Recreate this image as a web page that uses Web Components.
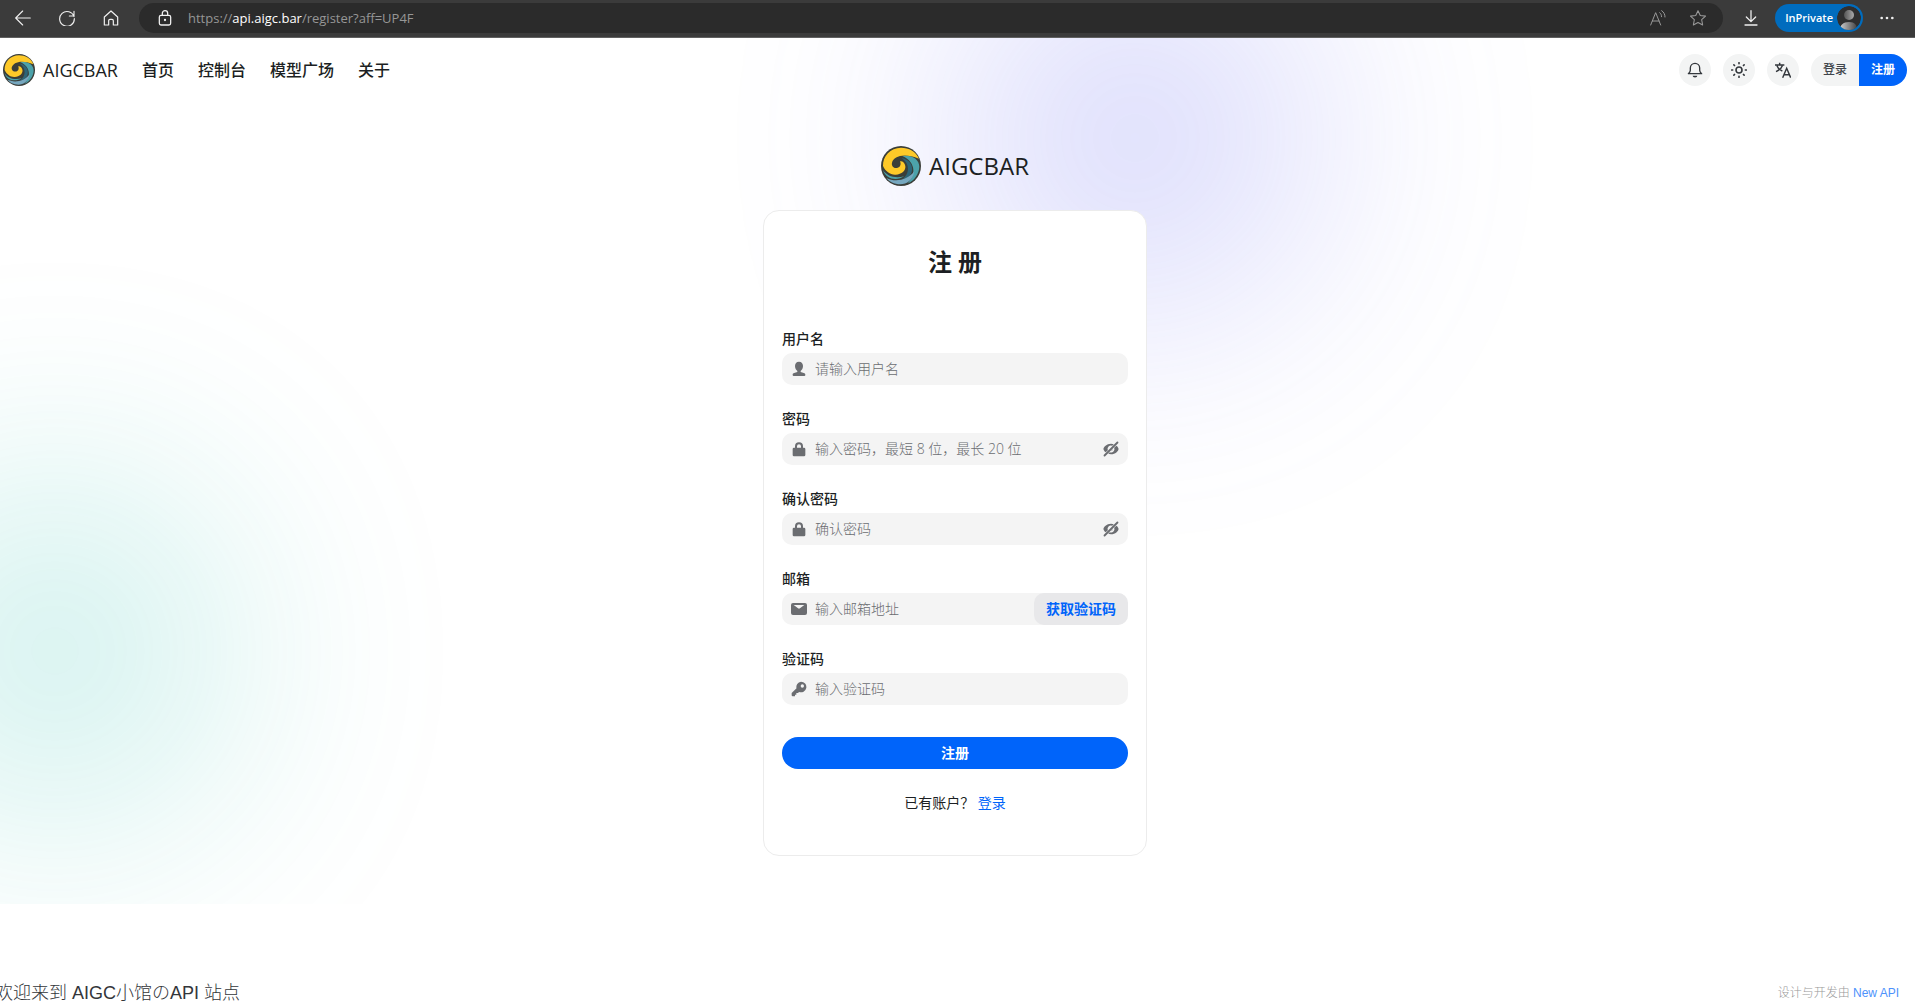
<!DOCTYPE html>
<html lang="zh-CN">
<head>
<meta charset="utf-8">
<meta name="viewport" content="width=device-width, initial-scale=1">
<title>AIGCBAR</title>
<style>
body{
    margin: 0;
    background: #fff;
    color: #1c1f23;
    font-family: "Open Sans", "Noto Sans CJK SC", sans-serif;
    font-size: 14px;
    line-height: 20px;
    overflow: hidden;
}
</style>
</head>
<body>
<browser-bar></browser-bar>
<register-page></register-page>

<script>
const ICONS = {
    user: '<path fill="currentColor" d="M12 1c4 0 6 3 6 6.500c0 3-1.500 6-3.500 7.500v1.500c3 .8 7 1.500 7 4c0 1.500-.8 2-2 2h-15c-1.200 0-2-.5-2-2c0-2.500 4-3.200 7-4V15C7.500 13.500 6 10.500 6 7.500C6 4 8 1 12 1z"/>',
    lock: '<path fill="currentColor" d="M6 10V8a6 6 0 0 1 12 0v2h1.500a2 2 0 0 1 2 2v9a2 2 0 0 1-2 2h-15a2 2 0 0 1-2-2v-9a2 2 0 0 1 2-2zm3 0h6V8a3 3 0 0 0-6 0z"/>',
    mail: '<path fill="currentColor" d="M0 6a3 3 0 0 1 3-3h18a3 3 0 0 1 3 3v12a3 3 0 0 1-3 3H3a3 3 0 0 1-3-3zm4 0l6.600 5a2.300 2.300 0 0 0 2.800 0L20 6z"/>',
    key: '<path fill="currentColor" fill-rule="evenodd" d="M15 1a8 8 0 1 1-3 15.400L10.500 18H8v2.500H6V23H2.500A1.500 1.500 0 0 1 1 21.500V18l7.300-7A8 8 0 0 1 15 1zm2 4a2.500 2.500 0 1 0 0 5a2.500 2.500 0 0 0 0-5z"/>',
    eyeClosed: '<path fill="currentColor" d="M20.700 1.300a1.400 1.400 0 0 1 2 2l-19.400 19.400a1.400 1.400 0 0 1-2-2zM12 4c1.500 0 2.900.3 4.200.7l-2.500 2.500A5 5 0 0 0 7.200 13.700l-3.300 3.300C1.900 15.400.7 13.400.7 12C.7 9 5.500 4 12 4zM20.200 7.100c2 1.600 3.100 3.500 3.100 4.900c0 3-4.800 8-11.300 8c-1.500 0-2.900-.3-4.200-.7l2.500-2.500A5 5 0 0 0 16.800 10.300zM14.700 12.400a2.800 2.800 0 0 1-2.500 2.400z"/>',
    bell: '<path fill="none" stroke="currentColor" stroke-width="2" stroke-linejoin="round" d="M2 17.500h20c-1.800-1.500-3-3-3-5V9a7 7 0 0 0-14 0v3.500c0 2-1.200 3.500-3 5z"/><path fill="currentColor" d="M8.500 20.500h7a3.500 2.700 0 0 1-7 0z"/>',
    sun: '<g fill="none" stroke="currentColor" stroke-width="2.400"><circle cx="12" cy="12" r="4.500"/><path stroke-linecap="round" d="M12 1v1.500M12 21.500V23M1 12h1.500M21.500 12H23M4.300 4.300l1 1M18.700 18.700l1 1M4.300 19.700l1-1M18.700 5.300l1-1"/></g>',
    lang: '<g fill="none" stroke="currentColor" stroke-width="2.200"><path d="M0 4.500h14M7 1v3.500M3 5.500c1.500 4 4.500 6.500 8 8M11 5.500c-1.500 4.500-5 7-9.500 9M11.500 23.500L17.500 9.500l6 14M13.500 19h8"/></g>',
    back: '<path fill="none" stroke="currentColor" stroke-width="1.600" stroke-linecap="round" stroke-linejoin="round" d="M23 12H1.500M11.500 1.500L1 12l10.500 10.500"/>',
    reload: '<path fill="none" stroke="currentColor" stroke-width="1.700" stroke-linecap="round" stroke-linejoin="round" d="M22.500 10a11 11 0 1 0 .5 3M22.500 2v7h-7"/>',
    home: '<path fill="none" stroke="currentColor" stroke-width="1.800" stroke-linejoin="round" d="M2 10.500L12 1.500l10 9V22.500h-6.500V16a2 2 0 0 0-2-2h-3a2 2 0 0 0-2 2v6.500H2z"/>',
    site: '<g fill="none" stroke="currentColor" stroke-width="1.900"><rect x="3.500" y="8" width="17" height="14.500" rx="2.500"/><path d="M8 8V5a4 4 0 0 1 8 0v3"/></g><circle fill="currentColor" cx="12" cy="15" r="1.700"/>',
    read: '<g fill="none" stroke="currentColor" stroke-width="1.500" stroke-linecap="round"><path d="M1 22.500L8.500 4 16 22.500M3.500 16.500h10M14.500 4c2 1.500 2.800 3.500 2.800 6M17.500 1c3.500 2.500 5 5.500 5 9.500"/></g>',
    star: '<path fill="none" stroke="currentColor" stroke-width="1.600" stroke-linejoin="round" d="M12 1l3.400 7.200 7.900 1-5.800 5.400 1.500 7.900L12 18.700 5 22.500l1.500-7.900L.7 9.200l7.900-1z"/>',
    download: '<path fill="none" stroke="currentColor" stroke-width="1.900" stroke-linecap="round" stroke-linejoin="round" d="M12 1v16M5 10.500l7 7 7-7M3 22.500h18"/>',
    more: '<g fill="currentColor"><circle cx="4" cy="12" r="2"/><circle cx="12" cy="12" r="2"/><circle cx="20" cy="12" r="2"/></g>'
};

class UiIcon extends HTMLElement{
    constructor(){
        super();
        const shadowRoot = this.attachShadow({mode: 'open'});
        shadowRoot.innerHTML = `
        <style>
        :host{
            display: block;
            flex: none;
            width: 16px;
            height: 16px;
        }

        svg{
            display: block;
            width: 100%;
            height: 100%;
        }
        </style>

        <svg viewBox="0 0 24 24" aria-hidden="true">${ICONS[this.getAttribute('name')] || ''}</svg>
        `;
    }
}

// round swirl mark + name, size="large" above the form
class BrandLogo extends HTMLElement{
    constructor(){
        super();
        const shadowRoot = this.attachShadow({mode: 'open'});
        shadowRoot.innerHTML = `
        <style>
        :host{
            display: flex;
            align-items: center;
            gap: 8px;
            font-size: 18px;
            line-height: 32px;
        }

        svg{
            width: 32px;
            height: 32px;
        }

        :host([size="large"]){
            font-size: 24px;
            justify-content: center;
        }

        :host([size="large"]) svg{
            width: 40px;
            height: 40px;
        }
        </style>

        <svg viewBox="0 0 120 120" aria-hidden="true">
            <circle cx="60" cy="60" r="60" fill="#3b3e39"/>
            <path fill="#4ca2aa" d="M64 30C92 25 115 40 115 62C114 84 100 104 80 112C103 90 108 50 64 30Z"/>
            <path fill="#2c6477" d="M62 36C86 40 99 60 91 82C86 92 76 98 64 99C86 84 88 54 62 36Z"/>
            <path fill="#4ca2aa" d="M6 72C18 91 42 98 70 91C48 105 15 101 6 72Z"/>
            <path fill="#76a7bf" d="M16 96C42 109 78 104 100 76C96 102 78 115 58 115C40 115 24 107 16 96Z"/>
            <path fill="#fec928" d="M114 38C105 16 83 5 60 5C28 5 5 30 6 60C14 77 28 87 44 86C62 85 75 74 73 60C71 50 64 44 57 46C62 56 56 67 46 66C36 66 31 58 33 50C38 30 70 20 114 38Z"/>
        </svg>
        <slot></slot>
        `;
    }
}

class BrowserBar extends HTMLElement{
    constructor(){
        super();
        const shadowRoot = this.attachShadow({mode: 'open'});
        shadowRoot.innerHTML = `
        <style>
        :host{
            display: flex;
            align-items: center;
            box-sizing: border-box;
            height: 38px;
            padding: 0 20px 2px 15px;
            background: #3b3b3b;
            border-bottom: 1px solid #606060;
            color: #f0f0f0;
        }

        button{
            padding: 0;
            border: 0;
            background: none;
            color: inherit;
            font: inherit;
        }

        nav{
            display: flex;
            gap: 28px;
        }

        .address{
            flex: 1;
            display: flex;
            align-items: center;
            height: 30px;
            margin: 0 20px 0 20px;
            padding: 0 17px 0 18px;
            border-radius: 15px;
            background: #2b2b2b;
        }

        .url{
            flex: 1;
            margin-left: 15px;
            font-size: 13px;
            color: #969696;
        }

        .url b{
            font-weight: 500;
            color: #fff;
        }

        .tools{
            display: flex;
            gap: 24px;
            color: #999;
        }

        .profile{
            display: flex;
            align-items: center;
            gap: 4px;
            box-sizing: border-box;
            height: 28px;
            margin: 0 16px 0 16px;
            padding: 0 2px 0 10px;
            border-radius: 14px;
            background: #006cbe;
            font-size: 11px;
            font-weight: 600;
            color: #fff;
        }

        .profile svg{
            width: 24px;
            height: 24px;
        }
        </style>

        <nav>
            <button aria-label="返回"><ui-icon name="back"></ui-icon></button>
            <button aria-label="刷新"><ui-icon name="reload"></ui-icon></button>
            <button aria-label="主页"><ui-icon name="home"></ui-icon></button>
        </nav>
        <div class="address">
            <ui-icon name="site"></ui-icon>
            <span class="url">https://<b>api.aigc.bar</b>/register?aff=UP4F</span>
            <div class="tools">
                <button aria-label="朗读"><ui-icon name="read"></ui-icon></button>
                <button aria-label="收藏"><ui-icon name="star"></ui-icon></button>
            </div>
        </div>
        <button aria-label="下载"><ui-icon name="download"></ui-icon></button>
        <button class="profile">InPrivate
            <svg viewBox="0 0 24 24" aria-hidden="true">
                <defs>
                    <linearGradient id="face"><stop offset="0" stop-color="#555"/><stop offset="1" stop-color="#aaa"/></linearGradient>
                    <linearGradient id="torso"><stop offset="0" stop-color="#ccc"/><stop offset="1" stop-color="#444"/></linearGradient>
                    <clipPath id="round"><circle cx="12" cy="12" r="12"/></clipPath>
                </defs>
                <g clip-path="url(#round)">
                    <circle cx="12" cy="12" r="12" fill="#2f2f2f"/>
                    <circle cx="12" cy="9" r="5" fill="url(#face)"/>
                    <path fill="url(#torso)" d="M3 24c0-5 3-8 9-8s8 3 8 8z"/>
                </g>
            </svg>
        </button>
        <button aria-label="更多"><ui-icon name="more"></ui-icon></button>
        `;
    }
}

class SiteHeader extends HTMLElement{
    constructor(){
        super();
        const shadowRoot = this.attachShadow({mode: 'open'});
        shadowRoot.innerHTML = `
        <style>
        :host{
            display: flex;
            align-items: center;
            height: 32px;
            padding: 16px 8px;
        }

        nav{
            display: flex;
            gap: 24px;
            margin-left: 24px;
            font-size: 16px;
            font-weight: 500;
        }

        a{
            color: inherit;
            text-decoration: none;
        }

        .actions{
            display: flex;
            gap: 12px;
            margin-left: auto;
        }

        button{
            height: 32px;
            padding: 0 12px;
            border: 0;
            background: #f3f4f4;
            color: #41464c;
            font: inherit;
            font-size: 12px;
            font-weight: 500;
        }

        .round{
            width: 32px;
            padding: 0 8px;
            border-radius: 16px;
            color: #33373c;
        }

        .account{
            display: flex;
            border-radius: 16px;
            overflow: hidden;
        }

        .account .primary{
            background: #0064fa;
            color: #fff;
            font-weight: 700;
        }
        </style>

        <brand-logo>AIGCBAR</brand-logo>
        <nav>
            <a href="#home">首页</a>
            <a href="#console">控制台</a>
            <a href="#pricing">模型广场</a>
            <a href="#about">关于</a>
        </nav>
        <div class="actions">
            <button class="round" aria-label="公告"><ui-icon name="bell"></ui-icon></button>
            <button class="round" aria-label="主题"><ui-icon name="sun"></ui-icon></button>
            <button class="round" aria-label="语言"><ui-icon name="lang"></ui-icon></button>
            <div class="account">
                <button>登录</button>
                <button class="primary">注册</button>
            </div>
        </div>
        `;
    }
}

class FormField extends HTMLElement{
    constructor(){
        super();
        const type = this.getAttribute('type') || 'text';
        const shadowRoot = this.attachShadow({mode: 'open'});
        shadowRoot.innerHTML = `
        <style>
        :host{
            display: flex;
            flex-direction: column;
            gap: 4px;
        }

        label{
            font-weight: 500;
        }

        .box{
            display: flex;
            align-items: center;
            gap: 8px;
            height: 32px;
            padding-left: 9px;
            border-radius: 10px;
            background: #f4f4f4;
            color: #6b6d71;
        }

        input{
            flex: 1;
            min-width: 0;
            height: 32px;
            box-sizing: border-box;
            padding: 0 0 2px;
            border: 0;
            outline: 0;
            background: none;
            color: #1c1f23;
            font: inherit;
        }

        input::placeholder{
            color: #6b6d71;
            opacity: 1;
            font-weight: 300;
        }

        .eye{
            padding: 0 9px 0 0;
            border: 0;
            background: none;
            color: inherit;
        }
        </style>

        <label for="field">${this.getAttribute('label')}</label>
        <div class="box">
            <ui-icon name="${this.getAttribute('icon')}"></ui-icon>
            <input id="field" type="${type}" placeholder="${this.getAttribute('placeholder')}">
            ${type === 'password' ? '<button class="eye" type="button" aria-label="显示密码"><ui-icon name="eyeClosed"></ui-icon></button>' : ''}
            <slot name="suffix"></slot>
        </div>
        `;
        const eye = shadowRoot.querySelector('.eye');
        if (eye){
            eye.addEventListener('click', this.toggle.bind(this), false);
        }
    }

    toggle(){
        const input = this.shadowRoot.querySelector('input');
        input.type = input.type === 'password' ? 'text' : 'password';
    }
}

class RegisterCard extends HTMLElement{
    constructor(){
        super();
        const shadowRoot = this.attachShadow({mode: 'open'});
        shadowRoot.innerHTML = `
        <style>
        :host{
            display: block;
            box-sizing: border-box;
            width: 100%;
            max-width: 384px;
            padding: 35px 18px 42px;
            border: 1px solid #ececec;
            border-radius: 16px;
            background: #fff;
        }

        h1{
            margin: 0 0 51px;
            font-size: 24px;
            line-height: 32px;
            font-weight: 700;
            text-align: center;
        }

        form{
            display: flex;
            flex-direction: column;
            gap: 24px;
        }

        button{
            height: 32px;
            border: 0;
            font: inherit;
            font-weight: 700;
        }

        .code{
            padding: 0 12px;
            border-radius: 10px;
            background: #e8e8ea;
            color: #0064fa;
        }

        .submit{
            margin-top: 8px;
            border-radius: 16px;
            background: #0064fa;
            color: #fff;
        }

        p{
            margin: 24px 0 0;
            text-align: center;
        }

        a{
            color: #0064fa;
            text-decoration: none;
        }
        </style>

        <h1>注 册</h1>
        <form>
            <form-field label="用户名" icon="user" placeholder="请输入用户名"></form-field>
            <form-field label="密码" icon="lock" type="password" placeholder="输入密码，最短 8 位，最长 20 位"></form-field>
            <form-field label="确认密码" icon="lock" type="password" placeholder="确认密码"></form-field>
            <form-field label="邮箱" icon="mail" type="email" placeholder="输入邮箱地址">
                <button class="code" slot="suffix" type="button">获取验证码</button>
            </form-field>
            <form-field label="验证码" icon="key" placeholder="输入验证码"></form-field>
            <button class="submit" type="button">注册</button>
        </form>
        <p>已有账户？ <a href="#login">登录</a></p>
        `;
    }
}

class SiteFooter extends HTMLElement{
    constructor(){
        super();
        const shadowRoot = this.attachShadow({mode: 'open'});
        shadowRoot.innerHTML = `
        <style>
        :host{
            display: flex;
            justify-content: space-between;
            align-items: center;
            padding: 78px 16px 0 0;
            font-family: "Liberation Sans", "Noto Sans CJK SC", sans-serif;
            font-weight: 300;
        }

        .welcome{
            font-size: 18px;
            line-height: 22px;
            color: #33363a;
        }

        .credit{
            font-size: 12px;
            color: #999;
        }

        a{
            color: #4d92fc;
            text-decoration: none;
        }
        </style>

        <span class="welcome">欢迎来到 AIGC小馆のAPI 站点</span>
        <span class="credit">设计与开发由 <a href="#new-api">New API</a></span>
        `;
    }
}

class RegisterPage extends HTMLElement{
    constructor(){
        super();
        const shadowRoot = this.attachShadow({mode: 'open'});
        shadowRoot.innerHTML = `
        <style>
        :host{
            display: block;
            margin-left: -5px;
        }

        .stage{
            position: relative;
            overflow: hidden;
        }

        .ball{
            position: absolute;
            width: 360px;
            height: 360px;
            border-radius: 50%;
            filter: blur(120px);
            pointer-events: none;
        }

        .indigo{
            top: -80px;
            left: 50%;
            background: #6366f1;
            opacity: 0.25;
        }

        .teal{
            top: 50%;
            left: -120px;
            background: #14b8a6;
            opacity: 0.2;
        }

        site-header, main{
            position: relative;
        }

        main{
            display: flex;
            flex-direction: column;
            align-items: center;
            gap: 24px;
            padding: 44px 8px 48px;
        }
        </style>

        <div class="stage">
            <div class="ball indigo"></div>
            <div class="ball teal"></div>
            <site-header></site-header>
            <main>
                <brand-logo size="large">AIGCBAR</brand-logo>
                <register-card></register-card>
            </main>
        </div>
        <site-footer></site-footer>
        `;
    }
}

customElements.define('ui-icon', UiIcon);
customElements.define('brand-logo', BrandLogo);
customElements.define('browser-bar', BrowserBar);
customElements.define('site-header', SiteHeader);
customElements.define('form-field', FormField);
customElements.define('register-card', RegisterCard);
customElements.define('site-footer', SiteFooter);
customElements.define('register-page', RegisterPage);
</script>
</body>
</html>
